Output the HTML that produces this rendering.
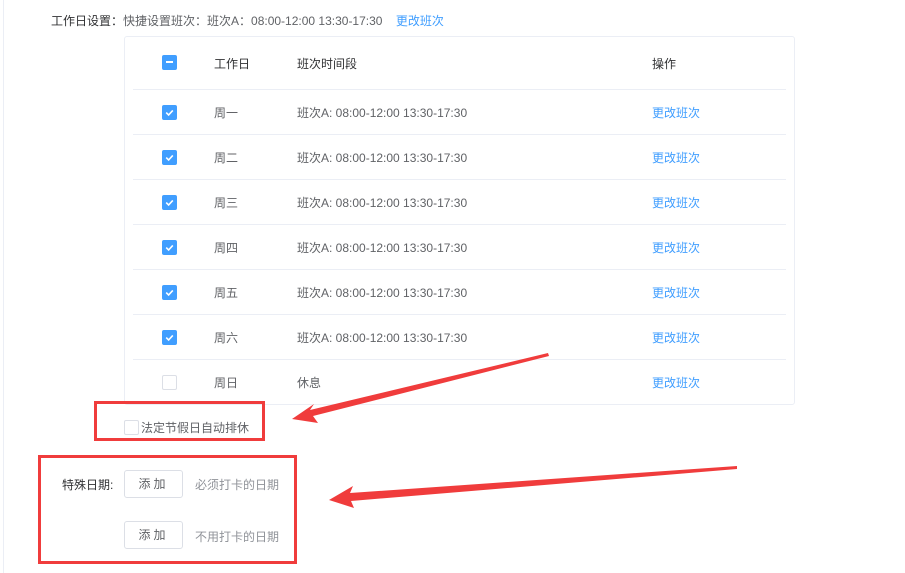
<!DOCTYPE html>
<html><head><meta charset="utf-8"><style>
body{margin:0;width:905px;height:573px;background:#fff;position:relative;overflow:hidden;font-family:"Liberation Sans","Noto Sans CJK SC",sans-serif;font-size:12px;color:#606266}
.a{position:absolute;white-space:nowrap}
.cb{position:absolute;width:13px;height:13px;border-radius:2px;background:#409eff;border:1px solid #409eff}
.cb.e{background:#fff;border-color:#dcdfe6}
.line{position:absolute;left:133px;width:653px;height:1px;background:#ebeef5}
.btn{position:absolute;width:57px;height:26px;border:1px solid #dcdfe6;border-radius:3px;text-align:center;line-height:26px;color:#606266;letter-spacing:3px}
.link{color:#409eff}
.box{position:absolute;border:3px solid #f03c3c}
</style></head><body>
<div style="position:absolute;left:3px;top:0;width:1px;height:573px;background:#ebeef5"></div>
<div class="a" style="left:51px;top:12px;color:#303133">工作日设置：<span style="color:#606266">快捷设置班次：班次A：08:00-12:00 13:30-17:30</span>&nbsp;&nbsp;&nbsp;&nbsp;<span class="link">更改班次</span></div>
<div style="position:absolute;left:124px;top:36px;width:669px;height:367px;border:1px solid #ebeef5;border-radius:3px"></div>
<div class="cb" style="left:162px;top:55px"><div style="position:absolute;left:3px;top:5px;width:7px;height:2px;background:#fff"></div></div>
<div class="a" style="left:214px;top:55px;color:#303133">工作日</div>
<div class="a" style="left:297px;top:55px;color:#303133">班次时间段</div>
<div class="a" style="left:652px;top:55px;color:#303133">操作</div>
<div class="line" style="top:89px"></div>
<div id="rows"></div>
<script>
var d=["周一","周二","周三","周四","周五","周六","周日"],h="";
for(var i=0;i<7;i++){var c=112+45*i;
h+='<div class="cb'+(i==6?' e':'')+'" style="left:162px;top:'+(c-7)+'px">'+(i<6?'<svg width="13" height="13" style="position:absolute;left:0;top:0"><path d="M3.2 6.6l2.4 2.4 4.2-4.6" stroke="#fff" stroke-width="1.6" fill="none"/></svg>':'')+'</div>';
h+='<div class="a" style="left:214px;top:'+(c-8)+'px">'+d[i]+'</div>';
h+='<div class="a" style="left:297px;top:'+(c-8)+'px">'+(i<6?'班次A: 08:00-12:00 13:30-17:30':'休息')+'</div>';
h+='<div class="a link" style="left:652px;top:'+(c-8)+'px">更改班次</div>';
if(i<6)h+='<div class="line" style="top:'+(c+22)+'px"></div>';}
document.getElementById('rows').innerHTML=h;
</script>
<div class="cb e" style="left:124px;top:420px"></div>
<div class="a" style="left:141px;top:419px">法定节假日自动排休</div>
<div class="a" style="left:62px;top:476px;color:#303133">特殊日期:</div>
<div class="btn" style="left:124px;top:470px">添加</div>
<div class="a" style="left:195px;top:476px;color:#909399">必须打卡的日期</div>
<div class="btn" style="left:124px;top:521px">添加</div>
<div class="a" style="left:195px;top:528px;color:#909399">不用打卡的日期</div>
<div class="box" style="left:94px;top:401px;width:165px;height:34px"></div>
<div class="box" style="left:38px;top:455px;width:253px;height:103px"></div>
<svg width="905" height="573" style="position:absolute;left:0;top:0">
<polygon points="548,353 310,410 314,404 292,419 318,423 313,416 549,356" fill="#f03c3c"/>
<polygon points="737,466 350,493 353,486 329,500 354,508 351,501 737,469" fill="#f03c3c"/>
</svg>
</body></html>
